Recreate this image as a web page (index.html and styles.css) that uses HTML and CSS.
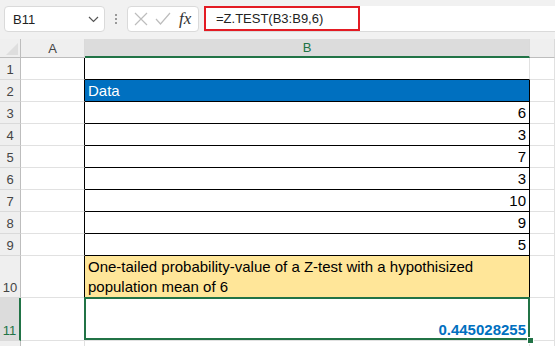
FILE: index.html
```html
<!DOCTYPE html>
<html lang="en">
<head>
    <meta charset="UTF-8">
    <meta name="viewport" content="width=device-width, initial-scale=1.0">
    <title>Z.TEST</title>
    <link rel="stylesheet" href="styles.css">
</head>
<body>
    <div class="toolbar">
        <div class="nameBox">
            <span>B11</span>
            <svg width="11" height="7" viewBox="0 0 11 7"><path d="M1 1 L5.5 5.5 L10 1" fill="none" stroke="#555" stroke-width="1.2"/></svg>
        </div>
        <div class="dots"><i></i><i></i><i></i></div>
        <div class="fxBox">
            <svg width="14" height="14" viewBox="0 0 14 14"><path d="M1 1 L13 13 M13 1 L1 13" stroke="#bdbdbd" stroke-width="1.2"/></svg>
            <svg width="16" height="14" viewBox="0 0 16 14"><path d="M1 7 L5.5 12 L15 1" fill="none" stroke="#bdbdbd" stroke-width="1.2"/></svg>
            <span class="fx">fx</span>
        </div>
        <div class="formula">
            <div class="formulaText">=Z.TEST(B3:B9,6)</div>
        </div>
    </div>

    <div class="sheet">
        <div class="corner"><span class="tri"></span></div>
        <div class="colHead">A</div>
        <div class="colHead active">B</div>
        <div class="colHead"></div>

        <div class="rowHead">1</div><div class="cell edgeR"></div><div class="cell edgeB"></div><div class="cell"></div>
        <div class="rowHead">2</div><div class="cell edgeR"></div><div class="cell tb head">Data</div><div class="cell"></div>
        <div class="rowHead">3</div><div class="cell edgeR"></div><div class="cell tb num">6</div><div class="cell"></div>
        <div class="rowHead">4</div><div class="cell edgeR"></div><div class="cell tb num">3</div><div class="cell"></div>
        <div class="rowHead">5</div><div class="cell edgeR"></div><div class="cell tb num">7</div><div class="cell"></div>
        <div class="rowHead">6</div><div class="cell edgeR"></div><div class="cell tb num">3</div><div class="cell"></div>
        <div class="rowHead">7</div><div class="cell edgeR"></div><div class="cell tb num">10</div><div class="cell"></div>
        <div class="rowHead">8</div><div class="cell edgeR"></div><div class="cell tb num">9</div><div class="cell"></div>
        <div class="rowHead">9</div><div class="cell edgeR"></div><div class="cell tb num">5</div><div class="cell"></div>
        <div class="rowHead">10</div><div class="cell edgeR"></div><div class="cell tb note">One-tailed probability-value of a Z-test with a hypothisized population mean of 6</div><div class="cell"></div>
        <div class="rowHead active">11</div><div class="cell"></div><div class="cell num result selected">0.445028255</div><div class="cell"></div>
        <div class="rowHead"></div><div class="cell"></div><div class="cell"></div><div class="cell"></div>
    </div>
</body>
</html>
```

FILE: styles.css
```css
html, body {
    margin: 0;
    background: #fff;
}
body {
    width: 555px;
    height: 346px;
    overflow: hidden;
    font-family: "Liberation Sans", Arial, sans-serif;
}

/* formula bar */
.toolbar {
    height: 39px;
    background: #f1f1f1;
    display: flex;
    align-items: flex-start;
    padding-top: 6px;
    box-sizing: border-box;
}
.nameBox {
    margin-left: 4px;
    width: 101px;
    height: 26px;
    box-sizing: border-box;
    background: #fff;
    border: 1px solid #dadada;
    border-radius: 4px;
    display: flex;
    align-items: center;
    justify-content: space-between;
    padding: 0 5px 0 8px;
    font-size: 13px;
    color: #222;
}
.dots {
    width: 22px;
    height: 26px;
    display: flex;
    flex-direction: column;
    align-items: center;
    justify-content: center;
    gap: 2px;
}
.dots i {
    width: 2px;
    height: 2px;
    background: #999;
}
.fxBox {
    width: 72px;
    height: 26px;
    box-sizing: border-box;
    background: #fff;
    border: 1px solid #dadada;
    border-radius: 4px;
    display: flex;
    align-items: center;
    gap: 7px;
    padding-left: 6px;
}
.fx {
    font-family: "Liberation Serif", "Times New Roman", serif;
    font-style: italic;
    font-size: 17px;
    color: #333;
    margin-left: 1px;
}
.formula {
    flex: 1;
    margin-left: 5px;
    height: 26px;
    background: #fff;
    border-bottom: 1px solid #dadada;
    box-sizing: border-box;
}
.formulaText {
    width: 156px;
    height: 25px;
    box-sizing: border-box;
    border: 2px solid #e31b23;
    font-size: 13px;
    color: #222;
    line-height: 21px;
    padding-left: 10px;
}

/* grid */
.sheet {
    display: grid;
    grid-template-columns: 21px 64px 445px 25px;
    grid-template-rows: 19px repeat(9, 22px) 42px 43px 22px;
    font-size: 15px;
}
.corner, .colHead, .rowHead {
    background: #efefef;
    color: #444;
    box-sizing: border-box;
    font-size: 13px;
}
.corner {
    position: relative;
    border-right: 1px solid #bdbdbd;
    border-bottom: 1px solid #bdbdbd;
}
.tri {
    position: absolute;
    right: 2px;
    bottom: 2px;
    width: 0;
    height: 0;
    border-left: 12px solid transparent;
    border-bottom: 12px solid #dedede;
}
.colHead {
    border-right: 1px solid #dadada;
    border-bottom: 1px solid #bdbdbd;
    display: flex;
    align-items: center;
    justify-content: center;
}
.colHead.active {
    background: #dcdcdc;
    color: #217346;
    border-bottom: 2px solid #217346;
}
.rowHead {
    border-right: 1px solid #bdbdbd;
    border-bottom: 1px solid #dadada;
    display: flex;
    align-items: flex-end;
    justify-content: center;
    padding-bottom: 2px;
}
.rowHead.active {
    background: #dcdcdc;
    color: #217346;
    border-right: 2px solid #217346;
}
.cell {
    box-sizing: border-box;
    border-right: 1px solid #e1e1e1;
    border-bottom: 1px solid #e1e1e1;
    display: flex;
    align-items: flex-end;
    padding: 0 3px 1px;
    color: #000;
    line-height: 19px;
}
.cell.edgeR {
    border-right-color: #000;
}
.cell.edgeB {
    border-bottom-color: #000;
}
.cell.tb {
    border-right-color: #000;
    border-bottom-color: #000;
}
.cell.num {
    justify-content: flex-end;
}
.cell.head {
    background: #0070c0;
    color: #fff;
}
.cell.note {
    background: #ffe699;
    line-height: 20px;
    padding-bottom: 0;
}
.cell.result {
    color: #0070c0;
    font-weight: bold;
}
.selected {
    position: relative;
}
.selected::before {
    content: "";
    position: absolute;
    left: -1px;
    top: -1px;
    right: -1px;
    bottom: 0;
    border: 2px solid #217346;
}
.selected::after {
    content: "";
    position: absolute;
    right: -5px;
    bottom: -4px;
    width: 5px;
    height: 5px;
    background: #217346;
    border: 1px solid #fff;
}
```
